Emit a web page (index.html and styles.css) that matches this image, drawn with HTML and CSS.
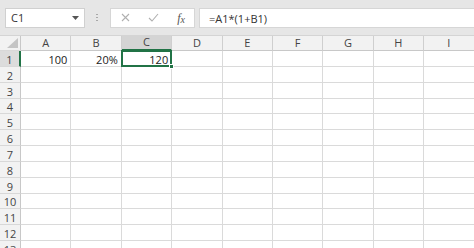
FILE: index.html
```html
<!DOCTYPE html>
<html lang="en">
<head>
<meta charset="UTF-8">
<title>Book1 - Excel</title>
<link rel="stylesheet" href="styles.css">
</head>
<body>
<div class="toolbar">
  <div class="namebox">
    <span>C1</span>
    <svg class="caret" width="7" height="4" viewBox="0 0 7 4"><path d="M0 0h7L3.5 4z" fill="#555"/></svg>
  </div>
  <div class="grip"></div>
  <div class="fxbox">
    <svg width="9" height="9" viewBox="0 0 9 9"><path d="M1 1l7 7M8 1L1 8" stroke="#b0b0b0" stroke-width="1.1" fill="none"/></svg>
    <svg width="11" height="9" viewBox="0 0 11 9"><path d="M1 5l3 3 6-7" stroke="#b0b0b0" stroke-width="1.1" fill="none"/></svg>
    <span class="fx">f<span class="fx-x">x</span></span>
  </div>
  <div class="formula">=A1*(1+B1)</div>
</div>

<div class="sheet">
  <div class="row head">
    <div class="rh corner"><svg width="11" height="10" viewBox="0 0 11 10"><path d="M11 0v10H0z" fill="#c4c4c4"/></svg></div>
    <div class="c">A</div><div class="c">B</div><div class="c sel">C</div><div class="c">D</div><div class="c">E</div>
    <div class="c">F</div><div class="c">G</div><div class="c">H</div><div class="c">I</div>
  </div>
  <div class="row">
    <div class="rh sel">1</div>
    <div class="c num">100</div><div class="c num">20%</div><div class="c num active">120<i class="handle"></i></div>
    <div class="c"></div><div class="c"></div><div class="c"></div><div class="c"></div><div class="c"></div><div class="c"></div>
  </div>
  <div class="row"><div class="rh">2</div><div class="c"></div><div class="c"></div><div class="c"></div><div class="c"></div><div class="c"></div><div class="c"></div><div class="c"></div><div class="c"></div><div class="c"></div></div>
  <div class="row"><div class="rh">3</div><div class="c"></div><div class="c"></div><div class="c"></div><div class="c"></div><div class="c"></div><div class="c"></div><div class="c"></div><div class="c"></div><div class="c"></div></div>
  <div class="row"><div class="rh">4</div><div class="c"></div><div class="c"></div><div class="c"></div><div class="c"></div><div class="c"></div><div class="c"></div><div class="c"></div><div class="c"></div><div class="c"></div></div>
  <div class="row"><div class="rh">5</div><div class="c"></div><div class="c"></div><div class="c"></div><div class="c"></div><div class="c"></div><div class="c"></div><div class="c"></div><div class="c"></div><div class="c"></div></div>
  <div class="row"><div class="rh">6</div><div class="c"></div><div class="c"></div><div class="c"></div><div class="c"></div><div class="c"></div><div class="c"></div><div class="c"></div><div class="c"></div><div class="c"></div></div>
  <div class="row"><div class="rh">7</div><div class="c"></div><div class="c"></div><div class="c"></div><div class="c"></div><div class="c"></div><div class="c"></div><div class="c"></div><div class="c"></div><div class="c"></div></div>
  <div class="row"><div class="rh">8</div><div class="c"></div><div class="c"></div><div class="c"></div><div class="c"></div><div class="c"></div><div class="c"></div><div class="c"></div><div class="c"></div><div class="c"></div></div>
  <div class="row"><div class="rh">9</div><div class="c"></div><div class="c"></div><div class="c"></div><div class="c"></div><div class="c"></div><div class="c"></div><div class="c"></div><div class="c"></div><div class="c"></div></div>
  <div class="row"><div class="rh">10</div><div class="c"></div><div class="c"></div><div class="c"></div><div class="c"></div><div class="c"></div><div class="c"></div><div class="c"></div><div class="c"></div><div class="c"></div></div>
  <div class="row"><div class="rh">11</div><div class="c"></div><div class="c"></div><div class="c"></div><div class="c"></div><div class="c"></div><div class="c"></div><div class="c"></div><div class="c"></div><div class="c"></div></div>
  <div class="row"><div class="rh">12</div><div class="c"></div><div class="c"></div><div class="c"></div><div class="c"></div><div class="c"></div><div class="c"></div><div class="c"></div><div class="c"></div><div class="c"></div></div>
  <div class="row"><div class="rh">13</div><div class="c"></div><div class="c"></div><div class="c"></div><div class="c"></div><div class="c"></div><div class="c"></div><div class="c"></div><div class="c"></div><div class="c"></div></div>
</div>
</body>
</html>
```

FILE: styles.css
```css
* {
box-sizing: border-box;
}
body {
margin: 0;
width: 474px;
height: 248px;
overflow: hidden;
background-color: #fff;
font-family: "Open Sans", "Liberation Sans", sans-serif;
font-size: 11px;
color: #333;
}
.toolbar {
display: flex;
align-items: center;
height: 36px;
padding-left: 5px;
background-color: #e6e6e6;
border-bottom: 1px solid #d4d4d4;
}
.namebox {
display: flex;
align-items: center;
justify-content: space-between;
width: 80px;
height: 20px;
padding: 0 5px 0 5px;
background-color: #fff;
border: 1px solid #d0d0d0;
}
.namebox span {
line-height: 1;
}
.grip {
width: 2px;
height: 9px;
margin: 0 12px 0 11px;
background-image: radial-gradient(circle, #a8a8a8 0.8px, transparent 1px);
background-size: 2px 3px;
}
.fxbox {
display: flex;
align-items: center;
justify-content: space-between;
width: 85px;
height: 20px;
padding: 0 9px 0 10px;
background-color: #fff;
border: 1px solid #d6d6d6;
}
.fx {
font-family: "Liberation Serif", serif;
font-style: italic;
font-size: 12px;
color: #555;
line-height: 1;
}
.fx-x {
font-size: 10px;
position: relative;
top: 1px;
}
.formula {
flex: 1;
height: 20px;
margin-left: 4px;
padding-left: 9px;
line-height: 19px;
background-color: #fff;
border: 1px solid #d6d6d6;
border-right: none;
}
.row {
display: flex;
height: 15.85px;
}
.row.head {
height: 15px;
}
.rh {
flex: none;
width: 21px;
display: flex;
align-items: flex-end;
justify-content: center;
padding-bottom: 1px;
background-color: #f2f2f2;
color: #444;
border-right: 1px solid #c8c8c8;
border-bottom: 1px solid #d8d8d8;
line-height: 1;
}
.rh.sel {
background-color: #dcdcdc;
border-right: 2px solid #217346;
}
.rh.corner {
align-items: flex-end;
justify-content: flex-end;
padding: 0 2px 2px 0;
}
.c {
flex: none;
width: 50.4px;
display: flex;
align-items: flex-end;
padding: 0 3px 1px 3px;
border-right: 1px solid #dadada;
border-bottom: 1px solid #dadada;
line-height: 1;
color: #222;
}
.head .c {
justify-content: center;
background-color: #f2f2f2;
color: #444;
border-right: 1px solid #cfcfcf;
border-bottom: 1px solid #c8c8c8;
padding-bottom: 2px;
}
.head .c.sel {
background-color: #d4d4d4;
border-bottom: 2px solid #217346;
}
.c.num {
justify-content: flex-end;
}
.c.active {
position: relative;
}
.c.active::after {
content: "";
position: absolute;
left: -1px;
top: -1px;
right: -1px;
bottom: -1px;
border: 2px solid #217346;
}
.handle {
position: absolute;
right: -3px;
bottom: -3px;
width: 5px;
height: 5px;
background-color: #217346;
border: 1px solid #fff;
z-index: 1;
}
```
